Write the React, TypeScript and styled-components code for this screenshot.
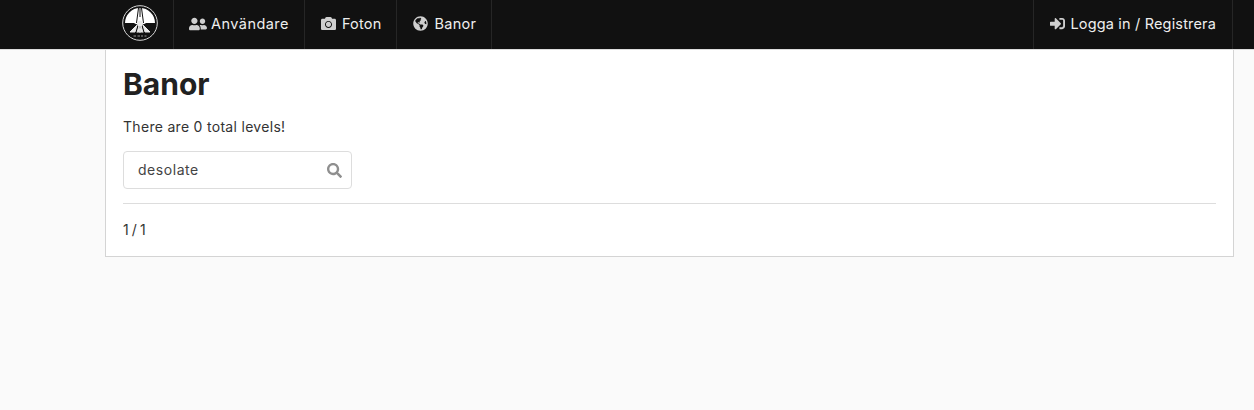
import React from 'react';
import styled, { createGlobalStyle } from 'styled-components';
import { FaUserFriends, FaCamera, FaGlobeAmericas, FaSignInAlt, FaSearch } from 'react-icons/fa';

const GlobalStyle = createGlobalStyle`
  html, body {
    margin: 0;
    padding: 0;
    height: 100%;
    background: #fafafa;
    font-family: Inter, "Liberation Sans", sans-serif;
    color: #212121;
  }
`

const Logo = () => (
  <svg width="36" height="36" viewBox="0 0 36 36">
    <circle cx="18" cy="18" r="17.3" fill="#111" stroke="#d8d8d8" strokeWidth="1" />
    <path d="M3 18 A15 15 0 0 1 33 18 L24 18 C21 20 15 20 12 18 Z" fill="#fff" />
    <path d="M14.5 18 L16.5 3 M21.500 18 L19.500 3 M18 3 V12" stroke="#111" strokeWidth="1" fill="none" />
    <circle cx="18" cy="18.500" r="3" fill="#e8e8e8" />
    <path d="M8 27 L15 20 L13 27 Z M28 27 L21 20 L23 27 Z M15 27.500 L17 21 L18 27.500 L19 21 L21 27.500" stroke="#e8e8e8" strokeWidth="1" fill="#e8e8e8" />
    <path d="M11.500 31 H14 M15.500 31 H18 M19 31 H21 M22.500 31 H24.500" stroke="#999" strokeWidth="1" />
  </svg>
)

export default function App() {
  return (
    <>
      <GlobalStyle />
      <Navbar>
        <NavGroup>
          <Brand><Logo /></Brand>
          <NavItem><FaUserFriends size={18} /><NavLabel $spacing={0.45}>Användare</NavLabel></NavItem>
          <NavItem><IconGap><FaCamera size={15} /></IconGap><NavLabel $spacing={0.2}>Foton</NavLabel></NavItem>
          <NavItem><IconGap><FaGlobeAmericas size={15} /></IconGap><NavLabel $spacing={0.3}>Banor</NavLabel></NavItem>
        </NavGroup>
        <LoginItem><IconGap><FaSignInAlt size={15} /></IconGap><NavLabel $spacing={0.17}>Logga in / Registrera</NavLabel></LoginItem>
      </Navbar>
      <Card>
        <Title>Banor</Title>
        <Summary>There are 0 total levels!</Summary>
        <SearchBox>
          <SearchInput defaultValue="desolate" />
          <SearchIcon><FaSearch size={15} /></SearchIcon>
        </SearchBox>
        <Divider />
        <Pager>1 / 1</Pager>
      </Card>
    </>
  );
}

const Navbar = styled.nav`
  display: flex;
  justify-content: space-between;
  height: 49px;
  padding: 0 21px 0 105px;
  background: #111111;
  border-bottom: 1px solid #dddddd;
`
const NavGroup = styled.div`
  display: flex;
`
const Brand = styled.div`
  display: flex;
  align-items: center;
  width: 68px;
  padding: 0 0 3px 17px;
  box-sizing: border-box;
`
const NavItem = styled.a`
  display: flex;
  align-items: center;
  gap: 4px;
  padding: 0 15px 2px;
  border-left: 1px solid #262626;
  color: #eeeeee;
  font-size: 14.5px;
  font-weight: 400;
  &:last-child {
    border-right: 1px solid #262626;
  }
  svg {
    color: #cfcfcf;
  }
`
const NavLabel = styled.span<{ $spacing: number }>`
  letter-spacing: ${p => p.$spacing}px;
`
const IconGap = styled.span`
  display: flex;
  margin: 0 2px 0 1px;
`
const LoginItem = styled(NavItem)`
  gap: 3px;
  padding: 0 16px 2px 15px;
  border-right: 1px solid #1c1c1c;
`
const Card = styled.main`
  margin: 0 20px 0 105px;
  padding: 16px 17px 16px;
  background: #ffffff;
  border: 1px solid #d4d4d4;
  border-top: 0;
`
const Title = styled.h1`
  margin: 0;
  font-size: 30px;
  line-height: 36px;
  font-weight: 700;
  color: #212121;
`
const Summary = styled.p`
  margin: 14px 0 0;
  font-size: 14px;
  line-height: 21px;
  letter-spacing: 0.3px;
  color: #333333;
`
const SearchBox = styled.div`
  position: relative;
  width: 229px;
  margin-top: 14px;
`
const SearchInput = styled.input`
  display: block;
  width: 100%;
  height: 38px;
  box-sizing: border-box;
  padding: 0 14px 2px;
  border: 1px solid #dddddd;
  border-radius: 4px;
  background: #ffffff;
  color: #444444;
  letter-spacing: 0.55px;
  font: 400 14px Inter, "Liberation Sans", sans-serif;
`
const SearchIcon = styled.span`
  position: absolute;
  top: 11px;
  right: 10px;
  color: #8f8f8f;
`
const Divider = styled.hr`
  margin: 14px 0 0;
  border: 0;
  border-top: 1px solid #dddddd;
`
const Pager = styled.div`
  margin-top: 15px;
  font-size: 14px;
  line-height: 21px;
  word-spacing: -0.8px;
  color: #333333;
`
